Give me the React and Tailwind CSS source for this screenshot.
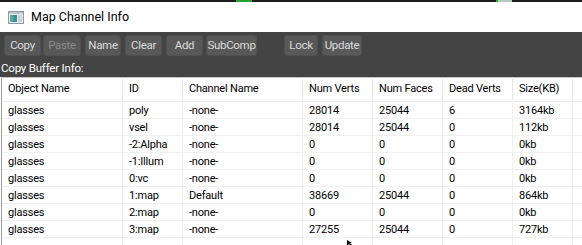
import React from "react";

const cols = [
  { w: "w-[121px]", label: "Object Name" },
  { w: "w-[60px]", label: "ID" },
  { w: "w-[120px]", label: "Channel Name" },
  { w: "w-[70px]", label: "Num Verts" },
  { w: "w-[70px]", label: "Num Faces" },
  { w: "w-[70px]", label: "Dead Verts" },
  { w: "w-[60px]", label: "Size(KB)" },
];

const rows = [
  ["glasses", "poly", "-none-", "28014", "25044", "6", "3164kb"],
  ["glasses", "vsel", "-none-", "28014", "25044", "0", "112kb"],
  ["glasses", "-2:Alpha", "-none-", "0", "0", "0", "0kb"],
  ["glasses", "-1:Illum", "-none-", "0", "0", "0", "0kb"],
  ["glasses", "0:vc", "-none-", "0", "0", "0", "0kb"],
  ["glasses", "1:map", "Default", "38669", "25044", "0", "864kb"],
  ["glasses", "2:map", "-none-", "0", "0", "0", "0kb"],
  ["glasses", "3:map", "-none-", "27255", "25044", "0", "727kb"],
  ["", "", "", "", "", "", ""],
];

const buttons = [
  { t: "Copy", w: "w-[37px]", ml: "ml-[4px]" },
  { t: "Paste", w: "w-[38px]", ml: "ml-[2px]", dis: true },
  { t: "Name", w: "w-[36px]", ml: "ml-[4px]" },
  { t: "Clear", w: "w-[37px]", ml: "ml-[4px]" },
  { t: "Add", w: "w-[37px]", ml: "ml-[4px]" },
  { t: "SubComp", w: "w-[51px]", ml: "ml-[3px]" },
  { t: "Lock", w: "w-[34px]", ml: "ml-[27px]" },
  { t: "Update", w: "w-[40px]", ml: "ml-[4px]" },
];

function WinIcon() {
  return (
    <svg width="16" height="13" viewBox="0 0 16 13">
      <rect x="0.5" y="0.5" width="15" height="12" fill="#e8eef2" stroke="#8a9aa6" />
      <rect x="1" y="1" width="14" height="2" fill="#b9c7d0" />
      <rect x="2" y="4" width="7" height="7" fill="#3f8fa6" />
      <rect x="2" y="4" width="3" height="7" fill="#5fb08a" />
      <rect x="10" y="4" width="4" height="7" fill="#c9d3d9" />
    </svg>
  );
}

export default function App() {
  return (
    <div className="relative w-[582px] h-[245px] overflow-hidden bg-white font-['Roboto','Noto_Sans',sans-serif] text-[11px] tracking-[-0.2px] text-black">
      <div className="h-[2px] bg-[#1c1c1c] flex">
        <div className="w-[236px]" />
        <div className="w-[16px] bg-[#2aa12a]" />
        <div className="w-[244px]" />
        <div className="w-[16px] bg-[#b8c8b8] border-l-2 border-[#22bb22]" />
      </div>
      <div className="h-[30px] flex items-center pl-[8px]">
        <WinIcon />
        <span className="ml-[7px] text-[12.5px] tracking-[0px] leading-none">Map Channel Info</span>
      </div>
      <div className="h-[45px] bg-[#444444] pt-[3px]">
        <div className="flex h-[21px]">
          {buttons.map((b) => (
            <div
              key={b.t}
              className={`${b.w} ${b.ml} h-[21px] rounded-[3px] bg-[#585858] border border-[#505050] flex items-center justify-center text-[11.5px] tracking-[-0.3px] ${b.dis ? "text-[#8a8a8a]" : "text-[#dcdcdc]"}`}
            >
              {b.t}
            </div>
          ))}
        </div>
        <div className="pl-[1px] pt-[4px] text-white text-[11.5px] tracking-[-0.2px] leading-[16px]">Copy Buffer Info:</div>
      </div>
      <div className="border-t border-[#c8c8c8] ml-[1px] border-l border-l-[#a0a0a0]">
        <div className="flex h-[24px] border-b border-[#f0f0f0]">
          {cols.map((c, i) => (
            <div key={i} className={`${c.w} shrink-0 flex items-center pl-[6px] border-r border-[#e5e5e5] my-[1px]`}>
              {c.label}
            </div>
          ))}
        </div>
        {rows.map((r, ri) => (
          <div key={ri} className="flex h-[17px] border-b border-[#f0f0f0]">
            {r.map((v, ci) => (
              <div key={ci} className={`${cols[ci].w} shrink-0 flex items-center pl-[6px] border-r border-[#f0f0f0] leading-none`}>
                {v}
              </div>
            ))}
          </div>
        ))}
      </div>
      <svg className="absolute left-[346px] top-[240px]" width="8" height="6" viewBox="0 0 8 6">
        <path d="M1 0 L1 6 L3 4 L5 6 L6 5 L4 3 L6 3 Z" fill="#000" />
      </svg>
    </div>
  );
}
